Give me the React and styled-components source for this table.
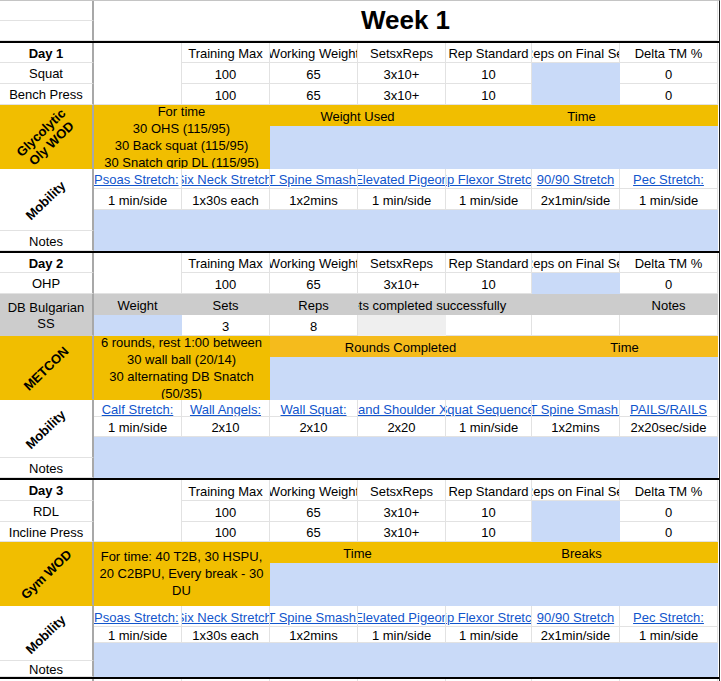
import React, { Fragment } from "react";
import styled, { createGlobalStyle } from "styled-components";

const YELLOW = "#f1be00";
const YELLOW_LIGHT = "#f5bb1c";
const BLUE = "#c9daf8";
const GRAY = "#cccccc";
const LIGHT = "#efefef";
const LINE = "#e2e2e2";

const HEADERS = [
  "Training Max",
  "Working Weight",
  "SetsxReps",
  "Rep Standard",
  "Reps on Final Set",
  "Delta TM %",
];

const STRETCH_A = [
  { t: "Psoas Stretch:", left: true },
  { t: "Six Neck Stretch:" },
  { t: "T Spine Smash:" },
  { t: "Elevated Pigeon" },
  { t: "Hip Flexor Stretch:" },
  { t: "90/90 Stretch" },
  { t: "Pec Stretch:" },
];
const REPS_A = ["1 min/side", "1x30s each", "1x2mins", "1 min/side", "1 min/side", "2x1min/side", "1 min/side"];

const STRETCH_B = [
  { t: "Calf Stretch:" },
  { t: "Wall Angels:" },
  { t: "Wall Squat:" },
  { t: "and Shoulder X-Stretch", left: true },
  { t: "Squat Sequence:" },
  { t: "T Spine Smash:" },
  { t: "PAILS/RAILS" },
];
const REPS_B = ["1 min/side", "2x10", "2x10", "2x20", "1 min/side", "1x2mins", "2x20sec/side"];

const GlobalStyle = createGlobalStyle`
  body {
    margin: 0;
    background: #fff;
    font-family: "Liberation Sans", Arial, sans-serif;
    font-size: 13px;
    color: #000;
  }
`;

const Sheet = styled.div`
  width: 720px;
  border-top: 1px solid #c4c4c4;
  border-right: 1px solid #1f1f1f;
  box-sizing: border-box;
  overflow: hidden;
`;

const Section = styled.div`
  display: grid;
  grid-template-columns: 94px 88px 88px 88px 88px 86px 88px 98px;
  grid-template-rows: ${(p) => p.$rows};
  border-bottom: ${(p) => (p.$open ? "none" : "2px solid #000")};
`;

const Cell = styled.div`
  grid-column: span ${(p) => p.$cs || 1};
  grid-row: span ${(p) => p.$rs || 1};
  box-sizing: border-box;
  min-width: 0;
  min-height: 0;
  display: flex;
  align-items: center;
  justify-content: ${(p) => (p.$left ? "flex-start" : "center")};
  overflow: hidden;
  white-space: nowrap;
  padding-top: 2px;
  padding-right: ${(p) => p.$padR || 0}px;
  background: ${(p) => p.$bg || "#fff"};
  border-right: 1px solid ${(p) => p.$bg || LINE};
  border-bottom: 1px solid ${(p) => p.$bg || LINE};
  font-weight: ${(p) => (p.$bold ? 700 : 400)};
`;

const Head = styled(Cell)`
  border-right: 2px solid #a8a8a8;
  white-space: ${(p) => (p.$wrap ? "normal" : "nowrap")};
  text-align: center;
  line-height: 16px;
`;

const Title = styled(Cell)`
  padding-top: 0;
  font-size: 26px;
  font-weight: 700;
`;

const WodText = styled(Cell)`
  white-space: pre-line;
  text-align: center;
  line-height: 17px;
  padding: 0 3px;
`;

const Diag = styled.span`
  display: inline-block;
  transform: rotate(-44deg);
  font-weight: 700;
  line-height: 15px;
  white-space: pre-line;
  text-align: center;
`;

const Link = styled.a`
  color: #1155cc;
  text-decoration: underline;
  white-space: nowrap;
`;

function Lifts({ day, lifts }) {
  return (
    <>
      <Head $bold>{day}</Head>
      <Cell $rs={lifts.length + 1} />
      {HEADERS.map((h) => (
        <Cell key={h}>{h}</Cell>
      ))}
      {lifts.map((l) => (
        <Fragment key={l}>
          <Head>{l}</Head>
          <Cell>100</Cell>
          <Cell>65</Cell>
          <Cell>3x10+</Cell>
          <Cell>10</Cell>
          <Cell $bg={BLUE} />
          <Cell>0</Cell>
        </Fragment>
      ))}
    </>
  );
}

function Wod({ label, text, heads, headBg = YELLOW }) {
  return (
    <>
      <Head $bg={YELLOW} $rs={2}>
        <Diag>{label}</Diag>
      </Head>
      <WodText $bg={YELLOW} $cs={2} $rs={2}>
        {text}
      </WodText>
      {heads.map(([t, span]) => (
        <Cell key={t} $cs={span} $bg={headBg}>
          {t}
        </Cell>
      ))}
      <Cell $cs={5} $bg={BLUE} />
    </>
  );
}

function Mobility({ links, reps }) {
  return (
    <>
      <Head $rs={3}>
        <Diag>Mobility</Diag>
      </Head>
      {links.map((l, i) => (
        <Cell key={i} $left={l.left}>
          <Link href="#">{l.t}</Link>
        </Cell>
      ))}
      {reps.map((r, i) => (
        <Cell key={i}>{r}</Cell>
      ))}
      <Cell $cs={7} $rs={2} $bg={BLUE} />
      <Head>Notes</Head>
    </>
  );
}

function Accessory() {
  return (
    <>
      <Head $bg={GRAY} $rs={2} $wrap>
        DB Bulgarian SS
      </Head>
      <Cell $bg={GRAY}>Weight</Cell>
      <Cell $bg={GRAY}>Sets</Cell>
      <Cell $bg={GRAY}>Reps</Cell>
      <Cell $bg={GRAY} $cs={3} $padR={190}>
        Number of sets completed successfully
      </Cell>
      <Cell $bg={GRAY}>Notes</Cell>
      <Cell $bg={BLUE} />
      <Cell>3</Cell>
      <Cell>8</Cell>
      <Cell $bg={LIGHT} />
      <Cell />
      <Cell />
      <Cell />
    </>
  );
}

export default function App() {
  return (
    <>
      <GlobalStyle />
      <Sheet>
        <Section $rows="20px 20px">
          <Head />
          <Title $cs={7} $rs={2}>
            Week 1
          </Title>
          <Head />
        </Section>

        <Section $rows="20px 21px 21px 21px 43px 20px 21px 21px 20px">
          <Lifts day="Day 1" lifts={["Squat", "Bench Press"]} />
          <Wod
            label={"Glycolytic\nOly WOD"}
            text={"For time\n30 OHS (115/95)\n30 Back squat (115/95)\n30 Snatch grip DL (115/95)"}
            heads={[
              ["Weight Used", 2],
              ["Time", 3],
            ]}
          />
          <Mobility links={STRETCH_A} reps={REPS_A} />
        </Section>

        <Section $rows="20px 21px 21px 21px 21px 43px 17px 20px 21px 20px">
          <Lifts day="Day 2" lifts={["OHP"]} />
          <Accessory />
          <Wod
            label="METCON"
            text={"6 rounds, rest 1:00 between\n30 wall ball (20/14)\n30 alternating DB Snatch (50/35)"}
            headBg={YELLOW_LIGHT}
            heads={[
              ["Rounds Completed", 3],
              ["Time", 2],
            ]}
          />
          <Mobility links={STRETCH_B} reps={REPS_B} />
        </Section>

        <Section $rows="21px 21px 20px 21px 43px 21px 16px 18px 16px">
          <Lifts day="Day 3" lifts={["RDL", "Incline Press"]} />
          <Wod
            label="Gym WOD"
            text="For time: 40 T2B, 30 HSPU, 20 C2BPU, Every break - 30 DU"
            heads={[
              ["Time", 2],
              ["Breaks", 3],
            ]}
          />
          <Mobility links={STRETCH_A} reps={REPS_A} />
        </Section>

        <Section $rows="21px" $open>
          <Head />
          <Cell />
          <Cell />
          <Cell />
          <Cell />
          <Cell />
          <Cell />
          <Cell />
        </Section>
      </Sheet>
    </>
  );
}
